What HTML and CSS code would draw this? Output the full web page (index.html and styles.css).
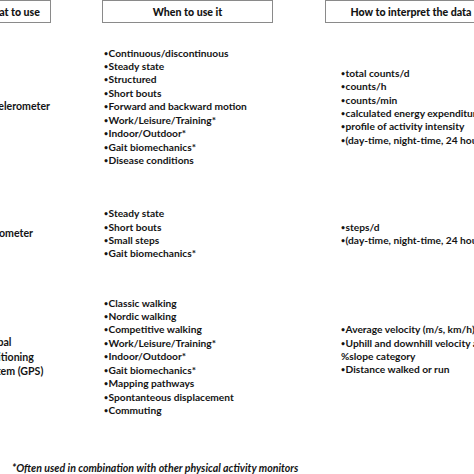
FILE: index.html
```html
<!DOCTYPE html>
<html>
<head>
<meta charset="utf-8">
<link rel="stylesheet" href="styles.css">
</head>
<body>
<div class="sheet">
  <div class="heads">
    <div class="head h1">What to use</div>
    <div class="head h2">When to use it</div>
    <div class="head h3">How to interpret the data</div>
  </div>
  <div class="table">
    <div class="row r1">
      <div class="label">Accelerometer</div>
      <ul class="list">
        <li><span class="b">•</span>Continuous/discontinuous</li>
        <li><span class="b">•</span>Steady state</li>
        <li><span class="b">•</span>Structured</li>
        <li><span class="b">•</span>Short bouts</li>
        <li><span class="b">•</span>Forward and backward motion</li>
        <li><span class="b">•</span>Work/Leisure/Training*</li>
        <li><span class="b">•</span>Indoor/Outdoor*</li>
        <li><span class="b">•</span>Gait biomechanics*</li>
        <li><span class="b">•</span>Disease conditions</li>
      </ul>
      <ul class="list data">
        <li><span class="b">•</span>total counts/d</li>
        <li><span class="b">•</span>counts/h</li>
        <li><span class="b">•</span>counts/min</li>
        <li><span class="b">•</span>calculated energy expenditure</li>
        <li><span class="b">•</span>profile of activity intensity</li>
        <li><span class="b">•</span>(day-time, night-time, 24 hours)</li>
      </ul>
    </div>
    <div class="row r2">
      <div class="label">Pedometer</div>
      <ul class="list">
        <li><span class="b">•</span>Steady state</li>
        <li><span class="b">•</span>Short bouts</li>
        <li><span class="b">•</span>Small steps</li>
        <li><span class="b">•</span>Gait biomechanics*</li>
      </ul>
      <ul class="list data">
        <li><span class="b">•</span>steps/d</li>
        <li><span class="b">•</span>(day-time, night-time, 24 hours)</li>
      </ul>
    </div>
    <div class="row r3">
      <div class="label multi">Global<br>Positioning<br>System (GPS)</div>
      <ul class="list">
        <li><span class="b">•</span>Classic walking</li>
        <li><span class="b">•</span>Nordic walking</li>
        <li><span class="b">•</span>Competitive walking</li>
        <li><span class="b">•</span>Work/Leisure/Training*</li>
        <li><span class="b">•</span>Indoor/Outdoor*</li>
        <li><span class="b">•</span>Gait biomechanics*</li>
        <li><span class="b">•</span>Mapping pathways</li>
        <li><span class="b">•</span>Spontanteous displacement</li>
        <li><span class="b">•</span>Commuting</li>
      </ul>
      <ul class="list data up">
        <li><span class="b">•</span>Average velocity (m/s, km/h)</li>
        <li><span class="b">•</span>Uphill and downhill velocity and</li>
        <li>%slope category</li>
        <li><span class="b">•</span>Distance walked or run</li>
      </ul>
    </div>
  </div>
  <div class="note">*Often used in combination with other physical activity monitors</div>
</div>
</body>
</html>
```

FILE: styles.css
```css
html, body {
  margin: 0;
  padding: 0;
  background: #ffffff;
  overflow: hidden;
}
body {
  width: 474px;
  height: 474px;
  font-family: Lato, "Open Sans", sans-serif;
  color: #141414;
}
.sheet {
  margin-left: -29px;
  width: 620px;
  white-space: nowrap;
}
.heads {
  display: flex;
  height: 23px;
}
.head {
  box-sizing: border-box;
  height: 23px;
  padding-top: 1px;
  border: 1.5px solid #8a8a8a;
  display: flex;
  align-items: center;
  justify-content: center;
  font-weight: 900;
  font-size: 10.6px;
}
.h1 { width: 80px; }
.h2 { width: 171px; margin-left: 51px; }
.h3 { width: 172px; margin-left: 52px; }
.table {
  display: flex;
  flex-direction: column;
}
.row {
  display: grid;
  grid-template-columns: 131px 239px 1fr;
  align-items: center;
}
.r1 { height: 168px; }
.r2 { height: 86px; }
.r3 { height: 160px; }
.label {
  padding-left: 10px;
  font-weight: 700;
  font-size: 10.6px;
  line-height: 13.4px;
}
.label.multi { line-height: 14.5px; }
.list {
  list-style: none;
  margin: 0;
  padding: 0 0 0 2px;
  font-weight: 700;
  font-size: 10.2px;
  line-height: 13.4px;
}
.list.data { padding-left: 0; }
.list.up { margin-bottom: 14px; }
.b {
  font-size: 7px;
  vertical-align: 1px;
  margin-right: 0.5px;
}
.note {
  margin-top: 24px;
  padding-left: 41px;
  font-weight: 700;
  font-style: italic;
  font-size: 10.6px;
  line-height: 14px;
}
```
